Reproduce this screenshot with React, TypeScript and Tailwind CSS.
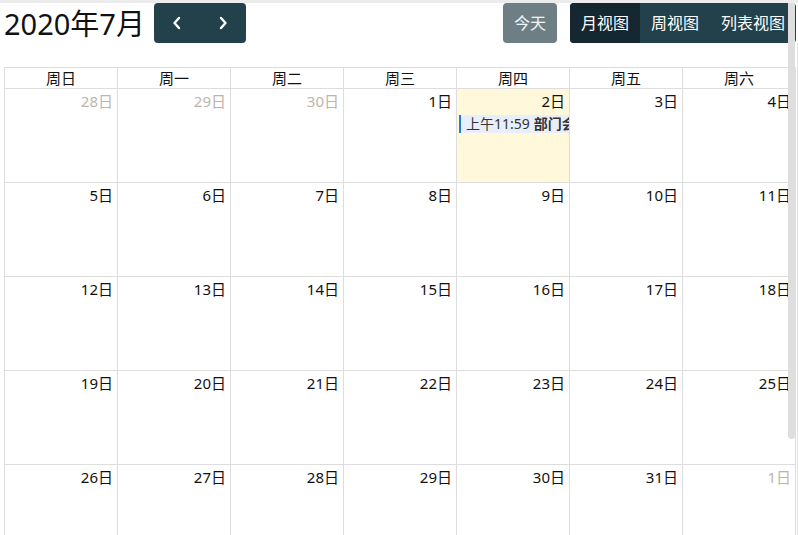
import React from 'react'

const weekdays = ['周日', '周一', '周二', '周三', '周四', '周五', '周六']

type Day = { n: number; other?: boolean; today?: boolean }

const weeks: Day[][] = [
  [{ n: 28, other: true }, { n: 29, other: true }, { n: 30, other: true }, { n: 1 }, { n: 2, today: true }, { n: 3 }, { n: 4 }],
  [5, 6, 7, 8, 9, 10, 11].map((n) => ({ n })),
  [12, 13, 14, 15, 16, 17, 18].map((n) => ({ n })),
  [19, 20, 21, 22, 23, 24, 25].map((n) => ({ n })),
  [{ n: 26 }, { n: 27 }, { n: 28 }, { n: 29 }, { n: 30 }, { n: 31 }, { n: 1, other: true }],
]

const ChevronLeft = () => (
  <svg width="12" height="14" viewBox="0 0 12 14" fill="none">
    <path d="M8 2 L3.5 7 L8 12" stroke="white" strokeWidth="2.4" strokeLinecap="round" strokeLinejoin="round" />
  </svg>
)

const ChevronRight = () => (
  <svg width="12" height="14" viewBox="0 0 12 14" fill="none">
    <path d="M4 2 L8.5 7 L4 12" stroke="white" strokeWidth="2.4" strokeLinecap="round" strokeLinejoin="round" />
  </svg>
)

export default function App() {
  return (
    <div className="relative h-[535px] w-[798px] overflow-hidden bg-white text-[#111] font-['Noto_Sans','Noto_Sans_CJK_SC',sans-serif]">
      <div className="h-[3px] bg-[#ececec]" />

      {/* toolbar */}
      <div className="flex h-10 items-center justify-between pl-1 pr-[2px]">
        <div className="flex items-center gap-[13px]">
          <h2 className="w-[137px] whitespace-nowrap text-[29px] leading-none">2020年7月</h2>
          <div className="flex h-10 overflow-hidden rounded-[4px] bg-[#22414b]">
            <button className="flex w-[46px] items-center justify-center">
              <ChevronLeft />
            </button>
            <button className="flex w-[46px] items-center justify-center">
              <ChevronRight />
            </button>
          </div>
        </div>
        <div className="flex items-center gap-[13px]">
          <button className="h-10 rounded-[4px] bg-[#6d7f84] px-[11px] text-[16px] text-white/90">今天</button>
          <div className="flex h-10 overflow-hidden rounded-[4px] bg-[#22414b] text-[16px] text-white">
            <button className="w-[70px] bg-[#152730]">月视图</button>
            <button className="w-[70px]">周视图</button>
            <button className="w-[86px]">列表视图</button>
          </div>
        </div>
      </div>

      {/* calendar grid */}
      <div className="ml-1 mt-6 w-[792px] border-l border-t border-[#ddd]">
        <div className="grid grid-cols-7 border-b border-[#ddd]">
          {weekdays.map((w) => (
            <div key={w} className="h-5 border-r border-[#ddd] text-center text-[15px] leading-5">
              {w}
            </div>
          ))}
        </div>
        {weeks.map((week, i) => (
          <div key={i} className="grid h-[94px] grid-cols-7 border-b border-[#ddd]">
            {week.map((d, j) => (
              <div
                key={j}
                className={`flex min-w-0 flex-col border-r border-[#ddd] ${d.today ? 'bg-[#fff8da]' : ''}`}
              >
                <div className={`pr-1 pt-[2px] text-right text-[15px] leading-5 ${d.other ? 'text-[#bdb5ad]' : ''}`}>
                  {d.n}日
                </div>
                {d.today && (
                  <div className="ml-[2px] mt-[4px] flex h-[18px] items-center overflow-hidden whitespace-nowrap border-l-2 border-[#1e7fd6] bg-[#e9effa] pl-[5px] text-[14px] leading-none text-[#333]">
                    <span>上午11:59</span>
                    <span className="ml-1 font-bold">部门会议</span>
                  </div>
                )}
              </div>
            ))}
          </div>
        ))}
      </div>

      {/* overlay scrollbar */}
      <div className="absolute right-[3px] top-[3px] h-[436px] w-[7px] rounded-b-full bg-[#dedede]" />
      <div className="absolute right-0 top-[43px] h-[492px] w-px bg-[#e4e4e4]" />
    </div>
  )
}
